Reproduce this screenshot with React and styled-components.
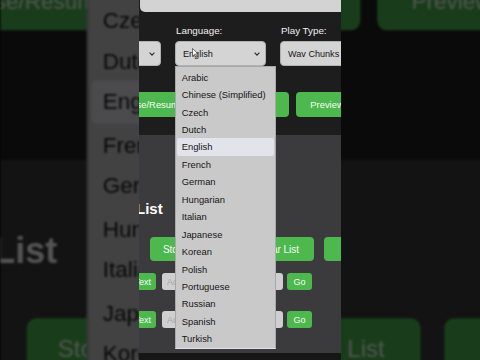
import React from "react";
import styled, { createGlobalStyle } from "styled-components";

const languages = [
  "Arabic",
  "Chinese (Simplified)",
  "Czech",
  "Dutch",
  "English",
  "French",
  "German",
  "Hungarian",
  "Italian",
  "Japanese",
  "Korean",
  "Polish",
  "Portuguese",
  "Russian",
  "Spanish",
  "Turkish",
];

function Chevron() {
  return (
    <svg width="6" height="4" viewBox="0 0 6 4">
      <polyline points="0.6,0.6 3,3.1 5.4,0.6" fill="none" stroke="#2a2a2a" strokeWidth="1.1" />
    </svg>
  );
}

function Pointer() {
  return (
    <svg width="7" height="10" viewBox="0 0 7 10">
      <path d="M0.5 0.5 L0.5 8.2 L2.4 6.4 L3.8 9.3 L5 8.8 L3.6 5.9 L6 5.9 Z" fill="#fff" stroke="#222" strokeWidth="0.6" />
    </svg>
  );
}

// the video frame; the blurred copy behind it is the same frame a bit later,
// when the dark controls panel reached further down
function Screen({ backdrop }) {
  return (
    <Frame>
      <TopStrip>
        <TopField />
      </TopStrip>
      <Controls>
        <FieldRow>
          <Field>
            <Label>Voice:</Label>
            <Select>
              <span>Default</span>
              <Chevron />
            </Select>
          </Field>
          <Field>
            <Label>Language:</Label>
            <Select>
              <span>English</span>
              <Chevron />
            </Select>
          </Field>
          <Field>
            <Label>Play Type:</Label>
            <Select>
              <span>Wav Chunks</span>
              <Chevron />
            </Select>
          </Field>
        </FieldRow>
        <ButtonRow $offset={-32} $gap={7} $top={26}>
          <Button $w={90}>Pause/Resume</Button>
          <Button $w={85}>Stop</Button>
          <Button $w={62}>Preview</Button>
        </ButtonRow>
      </Controls>
      <ListSection $darkTop={backdrop ? 36 : 0}>
        <Heading>List</Heading>
        <ButtonRow $offset={11} $gap={10} $top={19} $h={24}>
          <Button $w={82} $size={10}>Stop Playing</Button>
          <Button $w={72} $size={10}>Clear List</Button>
          <Button $w={70} $size={10}>Backup</Button>
        </ButtonRow>
        <EntryRow $top={12}>
          <SmallButton>Text</SmallButton>
          <Entry>Add text</Entry>
          <SmallButton>Go</SmallButton>
        </EntryRow>
        <EntryRow $top={21}>
          <SmallButton>Text</SmallButton>
          <Entry>Add text</Entry>
          <SmallButton>Go</SmallButton>
        </EntryRow>
      </ListSection>
      <BottomStrip />
      <Menu>
        {languages.map((lang) => (
          <Option key={lang} $active={lang === "English"}>
            {lang}
          </Option>
        ))}
      </Menu>
      <Cursor>
        <Pointer />
      </Cursor>
    </Frame>
  );
}

export default function App() {
  return (
    <>
      <GlobalStyle />
      <Stage>
        <Backdrop aria-hidden="true">
          <Screen backdrop />
        </Backdrop>
        <Screen />
      </Stage>
    </>
  );
}

const GlobalStyle = createGlobalStyle`
  body {
    margin: 0;
    background: #000;
    font-family: "Liberation Sans", Arial, sans-serif;
  }
`;

const Stage = styled.div`
  width: 480px;
  height: 360px;
  position: relative;
  overflow: hidden;
  display: flex;
  justify-content: center;
  background: #000;
`;

const Backdrop = styled.div`
  position: absolute;
  inset: 0;
  display: flex;
  justify-content: center;
  transform: scale(2.4);
  transform-origin: 238px 179px;
  filter: brightness(0.33) blur(0.45px);
`;

const Frame = styled.div`
  position: relative;
  width: 202px;
  height: 360px;
  flex-shrink: 0;
  overflow: hidden;
  display: flex;
  flex-direction: column;
  background: #3b3a3c;
  font-family: "Liberation Sans", Arial, sans-serif;
`;

const TopStrip = styled.div`
  height: 12px;
  background: #1d1d1d;
  padding-left: 1px;
  flex-shrink: 0;
`;

const TopField = styled.div`
  height: 12px;
  width: calc(100% + 8px);
  background: #d3d3d3;
  border-radius: 0 0 5px 5px;
`;

const Controls = styled.div`
  height: 123px;
  flex-shrink: 0;
  background: #1d1d1d;
  padding-top: 13px;
  box-sizing: border-box;
`;

const FieldRow = styled.div`
  display: flex;
  gap: 14px;
  margin-left: -69px;
`;

const Field = styled.div`
  width: 91px;
  flex-shrink: 0;
  display: flex;
  flex-direction: column;
  gap: 4px;
`;

const Label = styled.span`
  font-size: 9.8px;
  line-height: 12px;
  color: #f2f2f2;
  padding-left: 1px;
  white-space: nowrap;
`;

const Select = styled.div`
  height: 25px;
  box-sizing: border-box;
  display: flex;
  align-items: center;
  justify-content: space-between;
  padding: 0 5px 0 7px;
  background: #d4d4d4;
  border: 1px solid #b0b0b0;
  border-radius: 4px;
  font-size: 9.1px;
  color: #141414;
  white-space: nowrap;
`;

const ButtonRow = styled.div`
  display: flex;
  gap: ${(p) => p.$gap}px;
  margin-left: ${(p) => p.$offset}px;
  margin-top: ${(p) => p.$top}px;
  height: ${(p) => p.$h || 25}px;
`;

const Button = styled.div`
  width: ${(p) => p.$w}px;
  flex-shrink: 0;
  display: flex;
  align-items: center;
  justify-content: center;
  background: #4cb84e;
  border-radius: 4px;
  color: #f4fff4;
  font-size: ${(p) => p.$size || 9.4}px;
  white-space: nowrap;
`;

const ListSection = styled.div`
  flex: 1;
  padding-top: 65px;
  display: flex;
  flex-direction: column;
  background: linear-gradient(#1d1d1d ${(p) => p.$darkTop}px, #3b3a3c ${(p) => p.$darkTop}px);
`;

const Heading = styled.h2`
  margin: 0 0 0 -3px;
  font-size: 15px;
  line-height: 18px;
  font-weight: bold;
  color: #fff;
`;

const EntryRow = styled.div`
  display: flex;
  align-items: stretch;
  height: 17px;
  margin-top: ${(p) => p.$top}px;
  margin-left: -9.5px;
`;

const SmallButton = styled.div`
  display: flex;
  align-items: center;
  padding: 0 5px;
  background: #4cb84e;
  border-radius: 3px;
  color: #f4fff4;
  font-size: 9px;
  white-space: nowrap;
  &:last-child {
    padding: 0 6.5px;
  }
`;

const Entry = styled.div`
  width: 121px;
  margin: 0 4px 0 6px;
  display: flex;
  align-items: center;
  padding-left: 5px;
  box-sizing: border-box;
  background: #cfcfcf;
  border-radius: 3px;
  font-size: 9px;
  color: #a8a8a8;
`;

const BottomStrip = styled.div`
  height: 7px;
  flex-shrink: 0;
  background: #161616;
`;

const Menu = styled.div`
  position: absolute;
  left: 36px;
  top: 66px;
  width: 101px;
  height: 283px;
  box-sizing: border-box;
  padding: 1.5px 1px;
  background: #c9c9c9;
  border: 1px solid #a8a8a8;
  border-bottom-color: #e2e2e2;
  display: flex;
  flex-direction: column;
`;

const Option = styled.div`
  height: 17.45px;
  flex-shrink: 0;
  display: flex;
  align-items: center;
  padding-left: 4.7px;
  font-size: 9.4px;
  color: #151515;
  white-space: nowrap;
  background: ${(p) => (p.$active ? "#e3e3eb" : "transparent")};
  border-radius: 2px;
`;

const Cursor = styled.div`
  position: absolute;
  left: 53px;
  top: 48px;
  line-height: 0;
`;
